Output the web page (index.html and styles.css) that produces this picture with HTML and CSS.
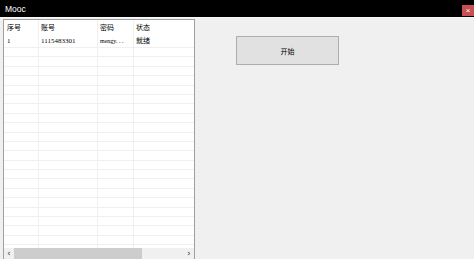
FILE: index.html
```html
<!DOCTYPE html>
<html>
  <head>
    <meta charset="UTF-8" />
    <title>Mooc</title>
    <link rel="stylesheet" href="styles.css">
  </head>
  <body>
    <!--title bar with the close button-->
    <div class="titlebar">
      <span class="title">Mooc</span>
      <span class="close">&times;</span>
    </div>
    <div class="main">
      <!--account list-->
      <div class="grid">
        <div class="rows">
          <div class="row head">
            <div class="cell">序号</div>
            <div class="cell">账号</div>
            <div class="cell">密码</div>
            <div class="cell">状态</div>
          </div>
          <div class="row first">
            <div class="cell">1</div>
            <div class="cell">1115483301</div>
            <div class="cell pwd">mengy. . .</div>
            <div class="cell">就绪</div>
          </div>
          <div class="row empty"><div class="cell"></div><div class="cell"></div><div class="cell"></div><div class="cell"></div></div>
          <div class="row empty"><div class="cell"></div><div class="cell"></div><div class="cell"></div><div class="cell"></div></div>
          <div class="row empty"><div class="cell"></div><div class="cell"></div><div class="cell"></div><div class="cell"></div></div>
          <div class="row empty"><div class="cell"></div><div class="cell"></div><div class="cell"></div><div class="cell"></div></div>
          <div class="row empty"><div class="cell"></div><div class="cell"></div><div class="cell"></div><div class="cell"></div></div>
          <div class="row empty"><div class="cell"></div><div class="cell"></div><div class="cell"></div><div class="cell"></div></div>
          <div class="row empty"><div class="cell"></div><div class="cell"></div><div class="cell"></div><div class="cell"></div></div>
          <div class="row empty"><div class="cell"></div><div class="cell"></div><div class="cell"></div><div class="cell"></div></div>
          <div class="row empty"><div class="cell"></div><div class="cell"></div><div class="cell"></div><div class="cell"></div></div>
          <div class="row empty"><div class="cell"></div><div class="cell"></div><div class="cell"></div><div class="cell"></div></div>
          <div class="row empty"><div class="cell"></div><div class="cell"></div><div class="cell"></div><div class="cell"></div></div>
          <div class="row empty"><div class="cell"></div><div class="cell"></div><div class="cell"></div><div class="cell"></div></div>
          <div class="row empty"><div class="cell"></div><div class="cell"></div><div class="cell"></div><div class="cell"></div></div>
          <div class="row empty"><div class="cell"></div><div class="cell"></div><div class="cell"></div><div class="cell"></div></div>
          <div class="row empty"><div class="cell"></div><div class="cell"></div><div class="cell"></div><div class="cell"></div></div>
          <div class="row empty"><div class="cell"></div><div class="cell"></div><div class="cell"></div><div class="cell"></div></div>
          <div class="row empty"><div class="cell"></div><div class="cell"></div><div class="cell"></div><div class="cell"></div></div>
          <div class="row empty"><div class="cell"></div><div class="cell"></div><div class="cell"></div><div class="cell"></div></div>
          <div class="row empty"><div class="cell"></div><div class="cell"></div><div class="cell"></div><div class="cell"></div></div>
          <div class="row empty"><div class="cell"></div><div class="cell"></div><div class="cell"></div><div class="cell"></div></div>
          <div class="row empty"><div class="cell"></div><div class="cell"></div><div class="cell"></div><div class="cell"></div></div>
          <div class="row empty"><div class="cell"></div><div class="cell"></div><div class="cell"></div><div class="cell"></div></div>
        </div>
        <!--horizontal scrollbar-->
        <div class="hscroll">
          <span class="arrow">&lsaquo;</span>
          <div class="track"><div class="thumb"></div></div>
          <span class="arrow">&rsaquo;</span>
        </div>
      </div>
      <!--right side with the start button-->
      <div class="side">
        <button class="start">开始</button>
      </div>
    </div>
  </body>
</html>
```
FILE: styles.css
```css
/* window background and default font */
body {
  margin: 0;
  width: 474px;
  height: 259px;
  overflow: hidden;
  background: #f0f0f0;
  font-family: "Liberation Serif", "Noto Sans CJK SC", serif;
  font-size: 7px;
  display: flex;
  flex-direction: column;
}
/* black title bar */
.titlebar {
  flex-shrink: 0;
  height: 17px;
  background: #000;
  display: flex;
  align-items: center;
  justify-content: space-between;
  border-bottom: 1px solid #f8f8f8;
}
.title {
  color: #fff;
  font-family: "Liberation Sans", "Noto Sans", sans-serif;
  font-size: 8.5px;
  margin-left: 5px;
  margin-top: 1px;
}
.close {
  width: 12px;
  height: 11px;
  margin-top: 3px;
  background: #c75050;
  color: #fff;
  font-family: "Liberation Sans", sans-serif;
  font-size: 8px;
  line-height: 11px;
  text-align: center;
}
/* everything under the title bar */
.main {
  flex: 1;
  min-height: 0;
  display: flex;
  padding-top: 1px;
}
/* the list of accounts */
.grid {
  width: 190px;
  margin-left: 3px;
  background: #fff;
  border: 1px solid #a0a0a0;
  border-bottom: none;
  display: flex;
  flex-direction: column;
}
.rows {
  flex: 1;
  min-height: 0;
  overflow: hidden;
}
.row {
  display: grid;
  grid-template-columns: 35px 59px 36px 1fr;
}
.cell {
  border-right: 1px solid #f0f0f0;
  padding-left: 2px;
  color: #000;
  white-space: nowrap;
  overflow: hidden;
}
.cell:first-child {
  padding-left: 3px;
}
.cell:last-child {
  border-right: none;
}
.head {
  height: 15px;
  line-height: 17px;
}
.first {
  height: 12px;
  line-height: 13px;
  border-bottom: 1px solid #f0f0f0;
}
.pwd {
  font-size: 6px;
}
.empty {
  height: 8.4px;
  border-bottom: 1px solid #f0f0f0;
}
/* scrollbar at the bottom of the list */
.hscroll {
  flex-shrink: 0;
  height: 11px;
  background: #f0f0f0;
  display: flex;
  align-items: center;
}
.arrow {
  width: 10px;
  text-align: center;
  color: #606060;
  font-family: "DejaVu Sans", sans-serif;
  font-size: 8px;
  font-weight: bold;
  line-height: 11px;
}
.track {
  flex: 1;
  height: 100%;
}
.thumb {
  width: 128px;
  height: 100%;
  background: #cdcdcd;
}
/* right side */
.side {
  flex: 1;
  padding-left: 41px;
  padding-top: 17px;
}
.start {
  width: 103px;
  height: 29px;
  background: #e1e1e1;
  border: 1px solid #adadad;
  font-family: "Noto Sans CJK SC", sans-serif;
  font-size: 7px;
  color: #000;
  padding: 0;
}
```
